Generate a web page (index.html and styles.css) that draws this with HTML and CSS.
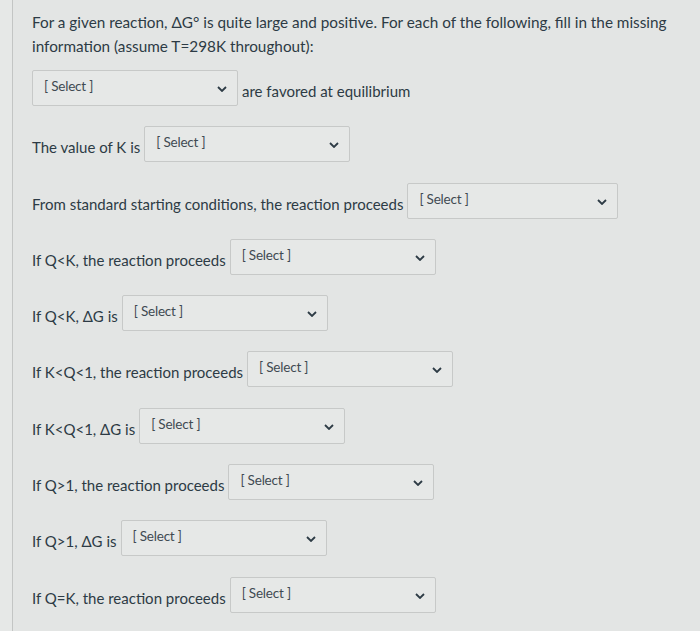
FILE: index.html
```html
<!DOCTYPE html>
<html>
<head>
<meta charset="utf-8">
<link rel="stylesheet" href="styles.css">
</head>
<body>
<div class="page">
  <div class="quiz">
    <p class="prompt">For a given reaction, ΔG° is quite large and positive. For each of the following, fill in the missing information (assume T=298K throughout):</p>
    <div class="rows">
      <div class="row">
        <div class="select"><span class="ph">[ Select ]</span><svg class="chev" viewBox="0 0 10 6" width="10" height="6"><path d="M1 1 L5 5 L9 1" fill="none" stroke="#2d3b45" stroke-width="1.8"/></svg></div>
        <span class="label after">are favored at equilibrium</span>
      </div>
      <div class="row">
        <span class="label">The value of K is</span>
        <div class="select"><span class="ph">[ Select ]</span><svg class="chev" viewBox="0 0 10 6" width="10" height="6"><path d="M1 1 L5 5 L9 1" fill="none" stroke="#2d3b45" stroke-width="1.8"/></svg></div>
      </div>
      <div class="row">
        <span class="label">From standard starting conditions, the reaction proceeds</span>
        <div class="select wide"><span class="ph">[ Select ]</span><svg class="chev" viewBox="0 0 10 6" width="10" height="6"><path d="M1 1 L5 5 L9 1" fill="none" stroke="#2d3b45" stroke-width="1.8"/></svg></div>
      </div>
      <div class="row">
        <span class="label">If Q&lt;K, the reaction proceeds</span>
        <div class="select"><span class="ph">[ Select ]</span><svg class="chev" viewBox="0 0 10 6" width="10" height="6"><path d="M1 1 L5 5 L9 1" fill="none" stroke="#2d3b45" stroke-width="1.8"/></svg></div>
      </div>
      <div class="row">
        <span class="label">If Q&lt;K, ΔG is</span>
        <div class="select"><span class="ph">[ Select ]</span><svg class="chev" viewBox="0 0 10 6" width="10" height="6"><path d="M1 1 L5 5 L9 1" fill="none" stroke="#2d3b45" stroke-width="1.8"/></svg></div>
      </div>
      <div class="row">
        <span class="label">If K&lt;Q&lt;1, the reaction proceeds</span>
        <div class="select"><span class="ph">[ Select ]</span><svg class="chev" viewBox="0 0 10 6" width="10" height="6"><path d="M1 1 L5 5 L9 1" fill="none" stroke="#2d3b45" stroke-width="1.8"/></svg></div>
      </div>
      <div class="row">
        <span class="label">If K&lt;Q&lt;1, ΔG is</span>
        <div class="select"><span class="ph">[ Select ]</span><svg class="chev" viewBox="0 0 10 6" width="10" height="6"><path d="M1 1 L5 5 L9 1" fill="none" stroke="#2d3b45" stroke-width="1.8"/></svg></div>
      </div>
      <div class="row">
        <span class="label">If Q&gt;1, the reaction proceeds</span>
        <div class="select"><span class="ph">[ Select ]</span><svg class="chev" viewBox="0 0 10 6" width="10" height="6"><path d="M1 1 L5 5 L9 1" fill="none" stroke="#2d3b45" stroke-width="1.8"/></svg></div>
      </div>
      <div class="row">
        <span class="label">If Q&gt;1, ΔG is</span>
        <div class="select"><span class="ph">[ Select ]</span><svg class="chev" viewBox="0 0 10 6" width="10" height="6"><path d="M1 1 L5 5 L9 1" fill="none" stroke="#2d3b45" stroke-width="1.8"/></svg></div>
      </div>
      <div class="row">
        <span class="label">If Q=K, the reaction proceeds</span>
        <div class="select"><span class="ph">[ Select ]</span><svg class="chev" viewBox="0 0 10 6" width="10" height="6"><path d="M1 1 L5 5 L9 1" fill="none" stroke="#2d3b45" stroke-width="1.8"/></svg></div>
      </div>
    </div>
  </div>
</div>
</body>
</html>
```
FILE: styles.css
```css
html, body {
  margin: 0;
  padding: 0;
}
body {
  background: #e4e6e5;
  font-family: Lato, "Liberation Sans", sans-serif;
  color: #2d3b45;
  width: 700px;
  height: 631px;
  overflow: hidden;
}
.page {
  padding-left: 12px;
  height: 631px;
  background: #e6e8e7;
}
.quiz {
  border-left: 1px solid #c3c5c4;
  height: 631px;
  padding: 10px 0 0 19px;
  background: #e3e5e4;
}
.prompt {
  margin: 0 0 12px 0;
  font-size: 15.3px;
  line-height: 24px;
  width: 650px;
}
.rows {
  display: flex;
  flex-direction: column;
  gap: 20.3px;
}
.row {
  display: flex;
  align-items: center;
  gap: 4px;
  height: 36px;
}
.label {
  font-size: 15px;
  line-height: 20px;
  margin-top: 6px;
  white-space: nowrap;
}
.select {
  position: relative;
  box-sizing: border-box;
  width: 206px;
  height: 36px;
  border: 1px solid #c7c9c8;
  border-radius: 2px;
  background: #e6e8e7;
  flex: none;
}
.select.wide {
  width: 211px;
}
.ph {
  position: absolute;
  left: 11px;
  top: 7px;
  font-size: 13.5px;
  color: #3f4a52;
  letter-spacing: -0.2px;
}
.chev {
  position: absolute;
  right: 10px;
  top: 15px;
}
```
